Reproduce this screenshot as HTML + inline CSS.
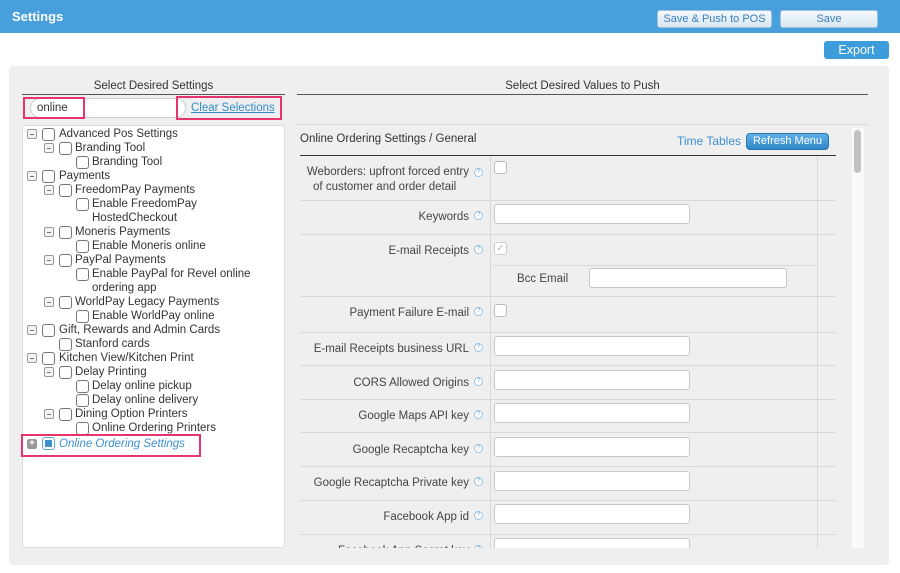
<!DOCTYPE html>
<html><head><style>
*{box-sizing:border-box;margin:0;padding:0}
body{width:900px;height:573px;background:#fff;font-family:"Liberation Sans",sans-serif;font-size:11.5px;color:#333;position:relative;overflow:hidden}
.a{position:absolute}
.hdr{left:0;top:0;width:900px;height:33px;background:#479fdc}
.btn{background:linear-gradient(#f4f9fd,#d8e6f1);border:1px solid #9fc3df;border-radius:3px;color:#3d7fb8;text-align:center;font-size:11px;line-height:16px}
.cb{width:13px;height:13px;border:1px solid #777;border-radius:3px;background:#fff}
.mn{width:10px;height:10px;border:1px solid #999;border-radius:2px;background:#f4f4f4}
.mn:after{content:"";position:absolute;left:2px;top:3.5px;width:4px;height:1px;background:#777}
.t{white-space:nowrap;font-size:11.5px;color:#333;margin-top:1px}
.hl{height:1px;background:#d8d8d8}
.lbl{right:399px;text-align:right;white-space:nowrap;color:#444;font-size:11.5px;margin-top:2px}
.q{position:absolute;left:177px;width:9px;height:9px;border:1px solid #9cc3e0;border-radius:50%;font-size:6px;line-height:7px;text-align:center;color:#6aa0cc;background:#fff}
.in{width:196px;height:20px;background:#fff;border:1px solid #c8c8c8;border-radius:3px}
.pk{border:2px solid #e6356e}
</style></head><body>
<div class="a hdr"></div>
<div class="a" style="left:12px;top:9px;color:#fff;font-size:13px;font-weight:bold">Settings</div>
<div class="a btn" style="left:657px;top:10px;width:115px;height:18px">Save &amp; Push to POS</div>
<div class="a btn" style="left:780px;top:10px;width:98px;height:18px">Save</div>
<div class="a" style="left:824px;top:41px;width:65px;height:18px;background:#3d9ddb;border-radius:3px;color:#fff;text-align:center;line-height:18px;font-size:12.5px">Export</div>

<div class="a" style="left:9px;top:66px;width:880px;height:499px;background:#efefef;border-radius:4px"></div>
<div class="a" style="left:22px;top:80px;width:263px;text-align:center">Select Desired Settings</div>
<div class="a" style="left:22px;top:94px;width:263px;height:1px;background:#555"></div>
<div class="a" style="left:30px;top:98px;width:156px;height:20px;background:#fff;border:1px solid #ccc;border-radius:10px"></div>
<div class="a" style="left:37px;top:102px">online</div>
<div class="a pk" style="left:23px;top:97px;width:62px;height:22px"></div>
<div class="a" style="left:191px;top:102px;color:#2f8ccc;text-decoration:underline">Clear Selections</div>
<div class="a pk" style="left:176px;top:96px;width:106px;height:24px"></div>

<div class="a" style="left:22px;top:125px;width:263px;height:423px;background:#fff;border:1px solid #ddd;border-radius:3px"></div>
<!-- tree -->
<div class="a mn" style="left:27px;top:129px"></div><div class="a cb" style="left:42px;top:128px"></div><div class="a t" style="left:59px;top:127px">Advanced Pos Settings</div>
<div class="a mn" style="left:44px;top:143px"></div><div class="a cb" style="left:59px;top:142px"></div><div class="a t" style="left:75px;top:141px">Branding Tool</div>
<div class="a cb" style="left:76px;top:156px"></div><div class="a t" style="left:92px;top:155px">Branding Tool</div>
<div class="a mn" style="left:27px;top:171px"></div><div class="a cb" style="left:42px;top:170px"></div><div class="a t" style="left:59px;top:169px">Payments</div>
<div class="a mn" style="left:44px;top:185px"></div><div class="a cb" style="left:59px;top:184px"></div><div class="a t" style="left:75px;top:183px">FreedomPay Payments</div>
<div class="a cb" style="left:76px;top:198px"></div><div class="a t" style="left:92px;top:197px">Enable FreedomPay</div><div class="a t" style="left:92px;top:211px">HostedCheckout</div>
<div class="a mn" style="left:44px;top:227px"></div><div class="a cb" style="left:59px;top:226px"></div><div class="a t" style="left:75px;top:225px">Moneris Payments</div>
<div class="a cb" style="left:76px;top:240px"></div><div class="a t" style="left:92px;top:239px">Enable Moneris online</div>
<div class="a mn" style="left:44px;top:255px"></div><div class="a cb" style="left:59px;top:254px"></div><div class="a t" style="left:75px;top:253px">PayPal Payments</div>
<div class="a cb" style="left:76px;top:268px"></div><div class="a t" style="left:92px;top:267px">Enable PayPal for Revel online</div><div class="a t" style="left:92px;top:281px">ordering app</div>
<div class="a mn" style="left:44px;top:297px"></div><div class="a cb" style="left:59px;top:296px"></div><div class="a t" style="left:75px;top:295px">WorldPay Legacy Payments</div>
<div class="a cb" style="left:76px;top:310px"></div><div class="a t" style="left:92px;top:309px">Enable WorldPay online</div>
<div class="a mn" style="left:27px;top:325px"></div><div class="a cb" style="left:42px;top:324px"></div><div class="a t" style="left:59px;top:323px">Gift, Rewards and Admin Cards</div>
<div class="a cb" style="left:59px;top:338px"></div><div class="a t" style="left:75px;top:337px">Stanford cards</div>
<div class="a mn" style="left:27px;top:353px"></div><div class="a cb" style="left:42px;top:352px"></div><div class="a t" style="left:59px;top:351px">Kitchen View/Kitchen Print</div>
<div class="a mn" style="left:44px;top:367px"></div><div class="a cb" style="left:59px;top:366px"></div><div class="a t" style="left:75px;top:365px">Delay Printing</div>
<div class="a cb" style="left:76px;top:380px"></div><div class="a t" style="left:92px;top:379px">Delay online pickup</div>
<div class="a cb" style="left:76px;top:394px"></div><div class="a t" style="left:92px;top:393px">Delay online delivery</div>
<div class="a mn" style="left:44px;top:409px"></div><div class="a cb" style="left:59px;top:408px"></div><div class="a t" style="left:75px;top:407px">Dining Option Printers</div>
<div class="a cb" style="left:76px;top:422px"></div><div class="a t" style="left:92px;top:421px">Online Ordering Printers</div>
<div class="a" style="left:27px;top:439px;width:10px;height:10px;background:#999;border-radius:2px;color:#fff;font-size:10px;line-height:10px;text-align:center;font-weight:bold">+</div>
<div class="a cb" style="left:42px;top:437px;border-color:#5aa6dc"><div style="margin:2px;width:7px;height:7px;background:#3d8fd0"></div></div>
<div class="a t" style="left:59px;top:437px;color:#3d8fd0;font-style:italic">Online Ordering Settings</div>
<div class="a pk" style="left:21px;top:434px;width:180px;height:23px"></div>

<!-- right -->
<div class="a" style="left:297px;top:80px;width:571px;text-align:center">Select Desired Values to Push</div>
<div class="a" style="left:297px;top:94px;width:571px;height:1px;background:#555"></div>
<div class="a hl" style="left:297px;top:124px;width:571px"></div>
<div class="a" style="left:297px;top:125px;width:571px;height:423px;background:#efefef;overflow:hidden">
 <div class="a" style="left:3px;top:8px">Online Ordering Settings / General</div>
 <div class="a" style="left:380px;top:9px;color:#3d8fd0;font-size:12px">Time Tables</div>
 <div class="a" style="left:449px;top:8px;width:83px;height:17px;background:linear-gradient(#5fb0e6,#2f86c8);border:1px solid #2a76b0;border-radius:4px;color:#fff;text-align:center;line-height:15px;font-size:11px">Refresh Menu</div>
 <div class="a" style="left:3px;top:30px;width:536px;height:1px;background:#333"></div>
 <div class="a" style="left:555px;top:3px;width:12px;height:420px;background:#fafafa"></div>
 <div class="a" style="left:557px;top:5px;width:7px;height:43px;background:#c2c2c2;border-radius:4px"></div>
 <div class="a" style="left:193px;top:31px;width:1px;height:400px;background:#d8d8d8"></div>
 <div class="a" style="left:520px;top:31px;width:1px;height:400px;background:#d8d8d8"></div>
 <!-- rows -->
 <div class="a lbl" style="top:38px;line-height:15px">Weborders: upfront forced entry<br>of customer and order detail&nbsp;&nbsp;&nbsp;&nbsp;</div><div class="q" style="top:43px">?</div>
 <div class="a cb" style="left:197px;top:36px;border-color:#bbb"></div>
 <div class="a hl" style="left:3px;top:75px;width:536px"></div>
 <div class="a lbl" style="top:84px">Keywords</div><div class="q" style="top:86px">?</div>
 <div class="a in" style="left:197px;top:79px"></div>
 <div class="a hl" style="left:3px;top:109px;width:536px"></div>
 <div class="a lbl" style="top:118px">E-mail Receipts</div><div class="q" style="top:120px">?</div>
 <div class="a cb" style="left:197px;top:117px;border-color:#ccc;color:#bbb;font-size:10px;line-height:11px;text-align:center">✓</div>
 <div class="a hl" style="left:196px;top:140px;width:322px"></div>
 <div class="a" style="left:220px;top:148px;color:#444">Bcc Email</div>
 <div class="a in" style="left:292px;top:143px;width:198px"></div>
 <div class="a hl" style="left:3px;top:171px;width:536px"></div>
 <div class="a lbl" style="top:180px">Payment Failure E-mail</div><div class="q" style="top:182px">?</div>
 <div class="a cb" style="left:197px;top:179px;border-color:#bbb"></div>
 <div class="a hl" style="left:3px;top:207px;width:536px"></div>
 <div class="a lbl" style="top:216px">E-mail Receipts business URL</div><div class="q" style="top:218px">?</div>
 <div class="a in" style="left:197px;top:211px"></div>
 <div class="a hl" style="left:3px;top:240px;width:536px"></div>
 <div class="a lbl" style="top:250px">CORS Allowed Origins</div><div class="q" style="top:252px">?</div>
 <div class="a in" style="left:197px;top:245px"></div>
 <div class="a hl" style="left:3px;top:274px;width:536px"></div>
 <div class="a lbl" style="top:283px">Google Maps API key</div><div class="q" style="top:285px">?</div>
 <div class="a in" style="left:197px;top:278px"></div>
 <div class="a hl" style="left:3px;top:307px;width:536px"></div>
 <div class="a lbl" style="top:317px">Google Recaptcha key</div><div class="q" style="top:319px">?</div>
 <div class="a in" style="left:197px;top:312px"></div>
 <div class="a hl" style="left:3px;top:341px;width:536px"></div>
 <div class="a lbl" style="top:350px">Google Recaptcha Private key</div><div class="q" style="top:352px">?</div>
 <div class="a in" style="left:197px;top:346px"></div>
 <div class="a hl" style="left:3px;top:375px;width:536px"></div>
 <div class="a lbl" style="top:384px">Facebook App id</div><div class="q" style="top:386px">?</div>
 <div class="a in" style="left:197px;top:379px"></div>
 <div class="a hl" style="left:3px;top:409px;width:536px"></div>
 <div class="a lbl" style="top:418px">Facebook App Secret key</div><div class="q" style="top:420px">?</div>
 <div class="a in" style="left:197px;top:413px"></div>
</div>
</body></html>
